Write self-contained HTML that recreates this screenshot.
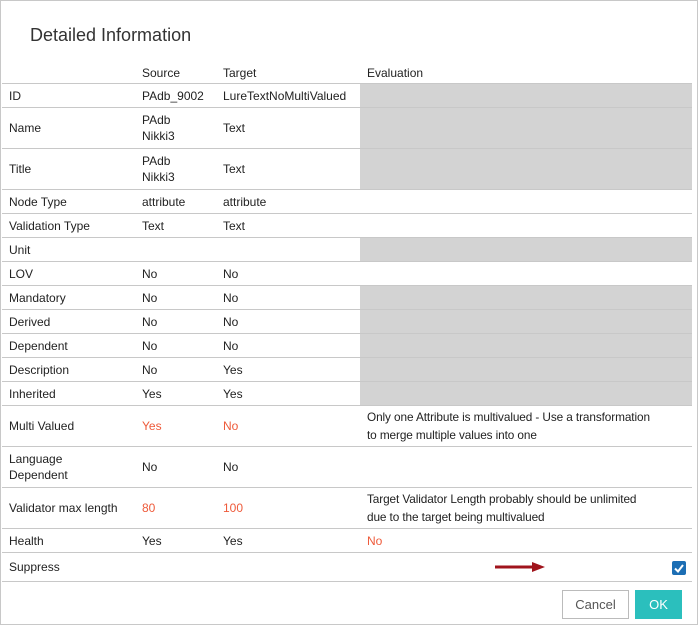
<!DOCTYPE html><html><head><style>
body{margin:0;width:698px;height:625px;background:#fff;font-family:"Liberation Sans",sans-serif;font-size:12px;color:#222;position:relative;overflow:hidden}
.dlg{position:absolute;left:0;top:0;width:696px;height:623px;border:1px solid #c8c8c8}
h1{position:absolute;left:29px;top:24px;margin:0;font-weight:normal;font-size:18px;color:#333}
.r{position:absolute;left:1px;width:690px;border-bottom:1px solid #c8c8c8}
.r div{position:absolute;top:0;height:100%;display:flex;align-items:center;line-height:16px}
.c1{left:7px}.c2{left:140px}.c3{left:221px}.c4{left:358px;width:332px;padding-left:7px;box-sizing:border-box}
.g{background:#d3d3d3}
.red{color:#ee5a3a}
.sm{font-size:11.8px;letter-spacing:-0.1px;white-space:nowrap}
.btn{position:absolute;top:589px;height:29px;box-sizing:border-box;font-size:13px;display:flex;align-items:center;justify-content:center}
</style></head><body><div class="dlg">
<h1>Detailed Information</h1>
<div class="r" style="top:61px;height:21px"><div class="c2">Source</div><div class="c3">Target</div><div class="c4">Evaluation</div></div>
<div class="r" style="top:83px;height:23px"><div class="c1">ID</div><div class="c2">PAdb_9002</div><div class="c3">LureTextNoMultiValued</div><div class="c4 g"></div></div>
<div class="r" style="top:107px;height:40px"><div class="c1">Name</div><div class="c2">PAdb<br>Nikki3</div><div class="c3">Text</div><div class="c4 g"></div></div>
<div class="r" style="top:148px;height:40px"><div class="c1">Title</div><div class="c2">PAdb<br>Nikki3</div><div class="c3">Text</div><div class="c4 g"></div></div>
<div class="r" style="top:189px;height:23px"><div class="c1">Node Type</div><div class="c2">attribute</div><div class="c3">attribute</div></div>
<div class="r" style="top:213px;height:23px"><div class="c1">Validation Type</div><div class="c2">Text</div><div class="c3">Text</div></div>
<div class="r" style="top:237px;height:23px"><div class="c1">Unit</div><div class="c4 g"></div></div>
<div class="r" style="top:261px;height:23px"><div class="c1">LOV</div><div class="c2">No</div><div class="c3">No</div></div>
<div class="r" style="top:285px;height:23px"><div class="c1">Mandatory</div><div class="c2">No</div><div class="c3">No</div><div class="c4 g"></div></div>
<div class="r" style="top:309px;height:23px"><div class="c1">Derived</div><div class="c2">No</div><div class="c3">No</div><div class="c4 g"></div></div>
<div class="r" style="top:333px;height:23px"><div class="c1">Dependent</div><div class="c2">No</div><div class="c3">No</div><div class="c4 g"></div></div>
<div class="r" style="top:357px;height:23px"><div class="c1">Description</div><div class="c2">No</div><div class="c3">Yes</div><div class="c4 g"></div></div>
<div class="r" style="top:381px;height:23px"><div class="c1">Inherited</div><div class="c2">Yes</div><div class="c3">Yes</div><div class="c4 g"></div></div>
<div class="r" style="top:405px;height:40px"><div class="c1">Multi Valued</div><div class="c2 red">Yes</div><div class="c3 red">No</div><div class="c4 sm" style="line-height:18px">Only one Attribute is multivalued - Use a transformation<br>to merge multiple values into one</div></div>
<div class="r" style="top:446px;height:40px"><div class="c1">Language<br>Dependent</div><div class="c2">No</div><div class="c3">No</div></div>
<div class="r" style="top:487px;height:40px"><div class="c1">Validator max length</div><div class="c2 red">80</div><div class="c3 red">100</div><div class="c4 sm" style="line-height:18px">Target Validator Length probably should be unlimited<br>due to the target being multivalued</div></div>
<div class="r" style="top:528px;height:23px"><div class="c1">Health</div><div class="c2">Yes</div><div class="c3">Yes</div><div class="c4 red">No</div></div>
<div class="r" style="top:552px;height:28px"><div class="c1">Suppress</div></div>
<svg style="position:absolute;left:493px;top:560px" width="52" height="12"><line x1="1" y1="6" x2="40" y2="6" stroke="#a0141c" stroke-width="3"/><path d="M38 1 L51 6 L38 11Z" fill="#a0141c"/></svg>
<svg style="position:absolute;left:671px;top:560px" width="14" height="14"><rect width="14" height="14" rx="2" fill="#1c6eb4"/><path d="M3 7.5 L6 10.5 L11 4" stroke="#fff" stroke-width="2" fill="none"/></svg>
<div class="btn" style="left:561px;width:67px;border:1px solid #bbb;color:#555">Cancel</div>
<div class="btn" style="left:634px;width:47px;background:#2bbfbd;color:#fff">OK</div>
</div></body></html>
